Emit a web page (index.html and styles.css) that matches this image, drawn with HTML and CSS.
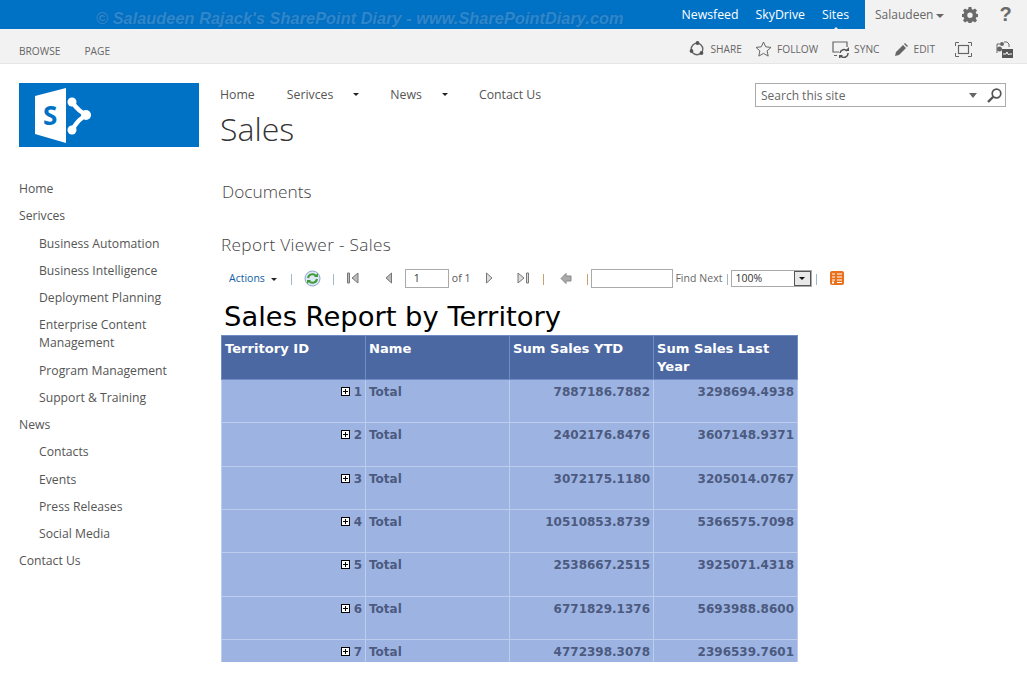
FILE: index.html
```html
<!DOCTYPE html>
<html lang="en">
<head>
  <meta charset="UTF-8" />
  <title>Sales</title>
  <link rel="stylesheet" href="styles.css">
</head>
<body>
  <div class="suite-bar">
    <div class="watermark">© Salaudeen Rajack's SharePoint Diary - www.SharePointDiary.com</div>
    <nav class="suite-links">
      <a>Newsfeed</a>
      <a>SkyDrive</a>
      <a class="current">Sites</a>
    </nav>
    <div class="suite-user">
      <span class="user-name">Salaudeen</span>
      <span class="caret-grey"></span>
      <svg class="gear" width="16" height="16" viewBox="0 0 16 16"><path fill="#6a6a6a" fill-rule="evenodd" d="M6.600 0h2.800l.4 2.200 1.300.6L13 1.500l2 2-1.300 1.900.6 1.300 2.200.4v2.800l-2.200.4-.6 1.300 1.300 1.900-2 2-1.900-1.300-1.300.6-.4 2.200H6.600l-.4-2.200-1.300-.6L3 15.500l-2-2 1.300-1.900-.6-1.300L0 9.900V7.100l1.700-.4.6-1.300L1 3.500l2-2 1.900 1.300 1.300-.6zM8 5.500a2.700 2.700 0 1 0 0 5.400 2.700 2.700 0 0 0 0-5.400z"/></svg>
      <span class="help">?</span>
    </div>
  </div>

  <div class="ribbon">
    <div class="ribbon-tabs">
      <a>BROWSE</a>
      <a>PAGE</a>
    </div>
    <div class="ribbon-actions">
      <a class="act act-share">
        <svg width="16" height="16" viewBox="0 0 16 16"><circle cx="8" cy="8" r="5.800" fill="none" stroke="#666" stroke-width="1.400"/><circle cx="8.500" cy="2" r="1.900" fill="#555"/><circle cx="2.500" cy="10" r="1.900" fill="#555"/><circle cx="12.500" cy="12" r="1.900" fill="#555"/></svg>
        SHARE
      </a>
      <a class="act act-follow">
        <svg width="17" height="16" viewBox="0 0 17 16"><path fill="none" stroke="#666" d="M8.500 1l2.200 4.800 5.300.6-3.900 3.500 1.100 5.200-4.700-2.700-4.700 2.700 1.100-5.200L1 6.400l5.300-.6z"/></svg>
        FOLLOW
      </a>
      <a class="act act-sync">
        <svg width="19" height="17" viewBox="0 0 19 17"><path fill="none" stroke="#666" stroke-width="1.200" d="M7 11H1V1h14v5"/><path d="M2 14h3v1H2z" fill="#666"/><path fill="none" stroke="#555" stroke-width="1.500" d="M8 12a4 4 0 0 1 7-2M16 12a4 4 0 0 1-7 3"/><path fill="#555" d="M13 10h4V6zM11 14H7v4z"/></svg>
        SYNC
      </a>
      <a class="act act-edit">
        <svg width="13" height="13" viewBox="0 0 13 13"><path fill="#666" d="M0 13l1-4 7-7 3 3-7 7zM9 1l1-1 3 3-1 1z"/></svg>
        EDIT
      </a>
      <svg class="focus" width="17" height="15" viewBox="0 0 17 15"><path fill="none" stroke="#666" d="M.5 4V.5H4M13 .5h3.500V4M16.500 11v3.500H13M4 14.500H.5V11"/><rect x="3.500" y="3.500" width="10" height="8" fill="none" stroke="#666" stroke-width="1.200"/></svg>
      <svg class="pulse" width="17" height="17" viewBox="0 0 17 17"><path fill="none" stroke="#666" d="M1 12V3h3M8 1h3l2 2v3"/><circle cx="6" cy="3" r="2" fill="#666"/><circle cx="3.500" cy="8" r="2.500" fill="#666"/><rect x="6" y="8" width="11" height="9" fill="#555"/><path fill="none" stroke="#fff" d="M7 13h3l1-2 1.500 3 1-1H16"/></svg>
    </div>
  </div>

  <div class="page">
    <aside class="side">
      <div class="logo">
        <svg width="56" height="56" viewBox="0 0 56 56">
          <path fill="#fff" d="M0 9L31 1v55L0 47z"/>
          <path fill="none" stroke="#fff" stroke-width="4.500" d="M37 15Q44 25 52 28Q44 31 37 43"/>
          <circle cx="37" cy="15" r="4.500" fill="#fff"/>
          <circle cx="37" cy="43" r="4.500" fill="#fff"/>
          <circle cx="51" cy="28" r="5" fill="#fff"/>
        </svg>
        <span class="logo-s">S</span>
      </div>
      <ul class="quick">
        <li class="top">Home</li>
        <li class="top">Serivces</li>
        <li class="sub">Business Automation</li>
        <li class="sub">Business Intelligence</li>
        <li class="sub">Deployment Planning</li>
        <li class="sub two">Enterprise Content Management</li>
        <li class="sub">Program Management</li>
        <li class="sub">Support &amp; Training</li>
        <li class="top">News</li>
        <li class="sub">Contacts</li>
        <li class="sub">Events</li>
        <li class="sub">Press Releases</li>
        <li class="sub">Social Media</li>
        <li class="top">Contact Us</li>
      </ul>
    </aside>

    <main class="content">
      <div class="head-row">
        <div>
          <nav class="top-nav">
            <a>Home</a>
            <a class="drop">Serivces</a>
            <a class="drop">News</a>
            <a>Contact Us</a>
          </nav>
          <h1>Sales</h1>
        </div>
        <div class="search">
          <span class="search-text">Search this site</span>
          <span class="search-caret"></span>
          <svg width="15" height="15" viewBox="0 0 15 15"><circle cx="9.500" cy="5.500" r="4.300" fill="none" stroke="#555" stroke-width="1.700"/><path stroke="#555" stroke-width="2.400" d="M6.500 8.500L1 14"/></svg>
        </div>
      </div>

      <h2 class="docs">Documents</h2>
      <h2 class="viewer">Report Viewer - Sales</h2>

      <div class="toolbar">
        <span class="actions">Actions</span>
        <span class="caret-black"></span>
        <span class="sep sep-a"></span>
        <svg class="refresh" width="17" height="17" viewBox="0 0 17 17"><circle cx="8.500" cy="8.500" r="7.500" fill="#dbe8f6" stroke="#8aa6c8"/><path fill="none" stroke="#3f9a35" stroke-width="2" d="M4 8a4.500 4.500 0 0 1 8-2M13 9a4.500 4.500 0 0 1-8 2"/><path fill="#3f9a35" d="M10 7h4V3zM7 10H3v4z"/></svg>
        <span class="sep sep-b"></span>
        <svg class="nav-first" width="12" height="12" viewBox="0 0 12 12"><path fill="#bbb" stroke="#777" d="M.5 1h2v10h-2zM11 1v10L5 6z"/></svg>
        <svg class="nav-prev" width="7" height="12" viewBox="0 0 7 12"><path fill="#bbb" stroke="#777" d="M6.500 1v10L1 6z"/></svg>
        <span class="page-box">1</span>
        <span class="of">of 1</span>
        <svg class="nav-next" width="7" height="12" viewBox="0 0 7 12"><path fill="#ddd" stroke="#777" d="M.5 1v10L6 6z"/></svg>
        <svg class="nav-last" width="12" height="12" viewBox="0 0 12 12"><path fill="#ddd" stroke="#777" d="M1 1v10l6-5zM9.500 1h2v10h-2z"/></svg>
        <span class="sep sep-c"></span>
        <svg class="nav-back" width="12" height="11" viewBox="0 0 12 11"><path fill="#aaa" stroke="#888" d="M6 .5L1 5.500l5 5V8h5V3H6z"/></svg>
        <span class="sep sep-d"></span>
        <span class="find-box"></span>
        <span class="find">Find</span>
        <span class="find next">Next</span>
        <span class="sep sep-e"></span>
        <span class="zoom-box">100%<span class="zoom-btn"></span></span>
        <span class="sep sep-f"></span>
        <svg class="export" width="14" height="14" viewBox="0 0 14 14"><rect width="14" height="14" rx="2" fill="#e9711c"/><path stroke="#fff" fill="none" d="M2 3h3M2 6h3M2 9h3M7 3h5M7 6h5M7 9h5M7 11.500h5"/><rect x="2" y="10.500" width="2" height="2" fill="#fff"/></svg>
      </div>

      <div class="report">
        <div class="report-title">Sales Report by Territory</div>
        <table>
          <thead>
            <tr>
              <th>Territory ID</th>
              <th>Name</th>
              <th>Sum Sales YTD</th>
              <th>Sum Sales Last Year</th>
            </tr>
          </thead>
          <tbody>
            <tr><td class="num"><span class="plus"></span>1</td><td>Total</td><td class="num">7887186.7882</td><td class="num">3298694.4938</td></tr>
            <tr><td class="num"><span class="plus"></span>2</td><td>Total</td><td class="num">2402176.8476</td><td class="num">3607148.9371</td></tr>
            <tr><td class="num"><span class="plus"></span>3</td><td>Total</td><td class="num">3072175.1180</td><td class="num">3205014.0767</td></tr>
            <tr><td class="num"><span class="plus"></span>4</td><td>Total</td><td class="num">10510853.8739</td><td class="num">5366575.7098</td></tr>
            <tr><td class="num"><span class="plus"></span>5</td><td>Total</td><td class="num">2538667.2515</td><td class="num">3925071.4318</td></tr>
            <tr><td class="num"><span class="plus"></span>6</td><td>Total</td><td class="num">6771829.1376</td><td class="num">5693988.8600</td></tr>
            <tr><td class="num"><span class="plus"></span>7</td><td>Total</td><td class="num">4772398.3078</td><td class="num">2396539.7601</td></tr>
          </tbody>
        </table>
      </div>
    </main>
  </div>
</body>
</html>
```

FILE: styles.css
```css
* {
  margin: 0;
  padding: 0;
  box-sizing: border-box;
}

body {
  font-family: 'Open Sans', 'Noto Sans', sans-serif;
  background: #fff;
  color: #444;
  height: 675px;
  overflow: hidden;
}

/* top bar */
.suite-bar {
  display: flex;
  height: 29px;
  background: #f2f2f2;
}

.watermark {
  flex: 1;
  background: #0072c6;
  padding: 9px 0 0 96px;
  font: italic bold 16.400px 'Liberation Sans', sans-serif;
  color: #2b88cf;
  text-shadow: 0 0 2px #1663a6;
  white-space: nowrap;
  overflow: hidden;
}

.suite-links {
  display: flex;
  background: #0072c6;
  color: #fff;
  font-size: 12.300px;
  padding-right: 16px;
  gap: 17px;
  align-items: center;
}

.suite-links .current {
  position: relative;
}

.suite-links .current::after {
  content: '';
  position: absolute;
  left: 50%;
  bottom: -8px;
  margin-left: -4px;
  border: 4px solid transparent;
  border-top: 0;
  border-bottom-color: #f2f2f2;
}

.suite-user {
  display: flex;
  align-items: center;
  width: 162px;
  padding-left: 10px;
  font-size: 12px;
  color: #666;
}

.caret-grey {
  margin: 2px 0 0 3px;
  border: 4px solid transparent;
  border-bottom: 0;
  border-top-color: #666;
}

.gear {
  margin-left: 18px;
}

.help {
  margin-left: 21px;
  font: bold 20px 'Liberation Sans', sans-serif;
  color: #6a6a6a;
}

/* ribbon */
.ribbon {
  display: flex;
  justify-content: space-between;
  align-items: center;
  height: 35px;
  background: #f2f2f2;
  border-bottom: 1px solid #e6e6e6;
  font-size: 10.200px;
  color: #666;
}

.ribbon-tabs {
  display: flex;
  gap: 24px;
  padding: 10px 0 0 19px;
}

.ribbon-actions {
  display: flex;
  align-items: center;
  padding: 6px 14px 0 0;
}

.act {
  display: flex;
  align-items: center;
  gap: 5px;
  margin-right: 13px;
}

.act-follow {
  margin-right: 14px;
}

.act-sync {
  gap: 3px;
  margin-right: 16px;
}

.focus {
  margin: 0 24px 0 7px;
}

/* page */
.page {
  display: flex;
}

.side {
  width: 220px;
  flex: none;
  padding: 19px 0 0 19px;
}

.logo {
  position: relative;
  display: flex;
  align-items: center;
  width: 180px;
  height: 64px;
  background: #0072c6;
  padding-left: 16px;
}

.logo-s {
  position: absolute;
  left: 24px;
  top: 14px;
  color: #0072c6;
  font-weight: 700;
  font-size: 26px;
  line-height: 36px;
}

.quick {
  list-style: none;
  margin-top: 33px;
  font-size: 12.200px;
  line-height: 18px;
  color: #555;
}

.quick li {
  margin-bottom: 9.250px;
}

.quick .sub {
  padding-left: 20px;
  width: 165px;
}

.content {
  flex: 1;
  padding-top: 19px;
  min-width: 0;
}

.head-row {
  display: flex;
  justify-content: space-between;
  padding-right: 21px;
}

.top-nav {
  display: flex;
  margin-top: 3px;
  font-size: 12.300px;
  line-height: 18px;
  color: #555;
}

.top-nav a {
  margin-right: 32px;
}

.top-nav .drop {
  margin-right: 31px;
}

.top-nav .drop::after {
  content: '';
  display: inline-block;
  margin: 0 0 3px 20px;
  border: 3px solid transparent;
  border-bottom: 0;
  border-top-color: #222;
}

h1 {
  font-size: 32px;
  font-weight: 300;
  line-height: 40px;
  color: #333;
  margin-top: 5px;
}

.search {
  display: flex;
  align-items: center;
  width: 251px;
  height: 24px;
  border: 1px solid #ababab;
  background: #fff;
  padding: 0 3px 0 5px;
  font-size: 12px;
  color: #666;
}

.search-text {
  flex: 1;
  padding-top: 1px;
}

.search-caret {
  margin-right: 10px;
  border: 4px solid transparent;
  border-width: 5px 4px 0;
  border-top-color: #666;
}

.docs,
.viewer {
  font-weight: 300;
  color: #444;
}

.docs {
  font-size: 17.300px;
  line-height: 24px;
  margin: 31px 0 0 2px;
}

.viewer {
  font-size: 17.300px;
  letter-spacing: .3px;
  line-height: 22px;
  margin: 30px 0 0 1px;
}

/* report viewer toolbar */
.toolbar {
  display: flex;
  align-items: center;
  height: 20px;
  margin: 12px 0 0 9px;
  font-size: 10.500px;
  color: #666;
}

.actions {
  color: #0f5ea8;
}

.caret-black {
  margin: 2px 0 0 6px;
  border: 3px solid transparent;
  border-bottom: 0;
  border-top-color: #222;
}

.sep {
  width: 1px;
  height: 11px;
  margin-top: 3px;
  background: #a3b5c9;
}

.sep-a { margin-left: 14px; }
.refresh { margin-left: 12px; }
.sep-b { margin-left: 12px; }
.nav-first { margin-left: 13px; }
.nav-prev { margin-left: 26px; }
.page-box {
  width: 44px;
  height: 19px;
  margin-left: 13px;
  border: 1px solid #aaa;
  padding-left: 8px;
  line-height: 17px;
  color: #333;
}
.of { margin-left: 3px; color: #555; }
.nav-next { margin-left: 16px; }
.nav-last { margin-left: 24px; }
.sep-c { margin-left: 14px; background: #c8a26a; }
.nav-back { margin-left: 16px; }
.sep-d { margin-left: 15px; background: #c8a26a; }
.find-box {
  width: 82px;
  height: 19px;
  margin-left: 3px;
  border: 1px solid #aaa;
}
.find { margin-left: 2px; }
.next { margin-left: 3px; }
.sep-e { margin-left: 5px; }
.zoom-box {
  display: flex;
  align-items: center;
  justify-content: space-between;
  width: 81px;
  height: 17px;
  margin-left: 3px;
  border: 1px solid #aaa;
  padding-left: 3px;
  color: #333;
}
.zoom-btn {
  position: relative;
  width: 17px;
  height: 15px;
  background: #e8e8e8;
  border: 1px solid #555;
}
.zoom-btn::after {
  content: '';
  position: absolute;
  left: 4px;
  top: 5px;
  border: 3.500px solid transparent;
  border-bottom: 0;
  border-top-color: #111;
}
.sep-f { margin-left: 4px; }
.export { margin-left: 13px; }

/* report */
.report {
  margin: 11px 0 0 1px;
  height: 363px;
  overflow: hidden;
}

.report-title {
  padding-left: 3px;
  font: 27.400px/36px 'DejaVu Sans', sans-serif;
  color: #000;
  white-space: nowrap;
}

table {
  table-layout: fixed;
  width: 577px;
  border-collapse: collapse;
  font: bold 12px/18px 'DejaVu Sans', sans-serif;
}

th,
td {
  vertical-align: top;
  padding: 3px 3px 0;
  text-align: left;
}

th {
  background: #4c68a2;
  color: #fff;
  border: 1px solid #6f8cc4;
  height: 44px;
  padding-top: 4px;
  font-size: 13.100px;
}

td {
  background: #9db4e2;
  color: #4c5a80;
  border: 1px solid #bccdee;
  height: 43.350px;
}

td.num {
  text-align: right;
}

.plus {
  position: relative;
  display: inline-block;
  width: 9px;
  height: 9px;
  margin-right: 4px;
  background: #fff;
  border: 1px solid #000;
}

.plus::before {
  content: '';
  position: absolute;
  left: 1px;
  top: 3px;
  width: 5px;
  height: 1px;
  background: #000;
}

.plus::after {
  content: '';
  position: absolute;
  left: 3px;
  top: 1px;
  width: 1px;
  height: 5px;
  background: #000;
}
```
